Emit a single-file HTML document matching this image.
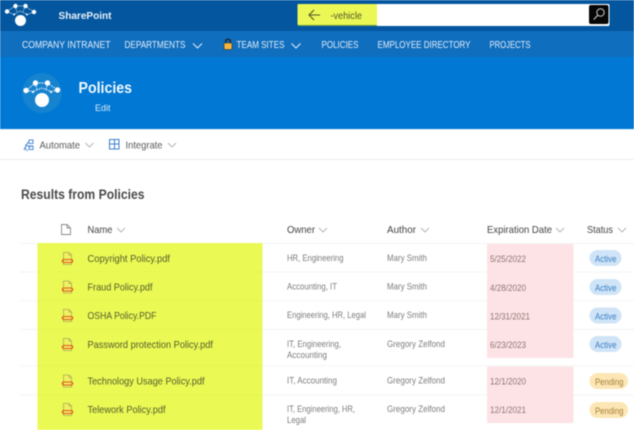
<!DOCTYPE html>
<html lang="en">
<head>
<meta charset="utf-8">
<title>Policies</title>
<style>
html,body{margin:0;padding:0;background:#fff;width:634px;height:430px;overflow:hidden}
svg{display:block;filter:blur(.45px)}
text{font-family:"Liberation Sans",sans-serif}
.nav{fill:#e3eef8;font-size:10.5px}
.hd{fill:#444;font-size:10.5px}
.nm{fill:#555e2c;font-size:10.5px}
.c{fill:#7c7c7c;font-size:9.5px}
.d{fill:#917474;font-size:9.5px}
.chev{fill:none;stroke:#b0b0b0;stroke-width:.9}
.navchev{fill:none;stroke:#dbe9f6;stroke-width:1.1}
.rl{stroke:#f3f3f3;stroke-width:1}
</style>
</head>
<body>
<svg width="634" height="430" viewBox="0 0 634 430" xmlns="http://www.w3.org/2000/svg">
<defs>
<symbol id="pdf" viewBox="0 0 14 14" overflow="visible">
<path d="M3 .5H8.500L11 3V12.500H3Z" fill="#eef25e" stroke="#b0a855" stroke-width=".8"/>
<path d="M8.500 .5V3H11" fill="none" stroke="#b0a855" stroke-width=".7"/>
<rect x="2.500" y="7.500" width="9" height="3" fill="#f4e85a" stroke="#dc5a24" stroke-width="1"/>
<rect x="1.200" y="8.200" width="1.800" height="1.600" fill="#dc5a24"/>
<rect x="11" y="8.200" width="1.800" height="1.600" fill="#dc5a24"/>
</symbol>
</defs>

<!-- top bar -->
<rect width="634" height="31" fill="#04569f"/>
<g fill="#fff">
<path d="M7 11.500L15 6L25 6L34 12M7 11.500L14 14.500L20 11L27 14.500L34 12M15 6L17 12M25 6L23 12" fill="none" stroke="#e6f0f8" stroke-width=".7" stroke-dasharray="1.400 .8"/>
<circle cx="7" cy="11.500" r="2.200"/>
<circle cx="15.500" cy="6" r="2.200"/>
<circle cx="25.500" cy="6" r="2.200"/>
<circle cx="34" cy="12" r="2.200"/>
<circle cx="14" cy="14.500" r="1"/>
<circle cx="27" cy="14.500" r="1"/>
<circle cx="20.500" cy="20.500" r="5.500"/>
</g>
<text x="58.500" y="19" fill="#e8f1f9" font-size="10.500" font-weight="700" textLength="53" lengthAdjust="spacingAndGlyphs">SharePoint</text>

<!-- search box -->
<rect x="297.500" y="4" width="312" height="22" rx="1.500" fill="#fff"/>
<path d="M299 4H377V25.500H299Q297.500 25.500 297.500 24V5.500Q297.500 4 299 4Z" fill="#eaf754"/>
<path d="M297.500 24.500Q298 25.500 299 25.500H377" fill="none" stroke="#3d7a2a" stroke-width=".8"/>
<path d="M320 15H309M314 10L309 15L314 20" fill="none" stroke="#55592a" stroke-width="1.100"/>
<text x="330.500" y="19" fill="#55592a" font-size="10" textLength="31.500" lengthAdjust="spacingAndGlyphs">-vehicle</text>
<rect x="589" y="5" width="19.500" height="19" rx="2" fill="#060606"/>
<circle cx="600.500" cy="12.500" r="3.700" fill="none" stroke="#c8c8c8" stroke-width="1"/>
<path d="M597.800 15.300L593.700 19.500" stroke="#c8c8c8" stroke-width="1.100"/>

<!-- nav -->
<rect y="31" width="634" height="26" fill="#106ebe"/>
<text class="nav" x="22" y="48" textLength="88.500" lengthAdjust="spacingAndGlyphs">COMPANY INTRANET</text>
<text class="nav" x="124.500" y="48" textLength="61" lengthAdjust="spacingAndGlyphs">DEPARTMENTS</text>
<path class="navchev" d="M193 43.500L197.500 48L202 43.500"/>
<rect x="224" y="43" width="8" height="6.500" rx="1" fill="#f2b63c" stroke="#2a2a20" stroke-width=".6"/>
<path d="M225.700 43V41.300Q225.700 39.300 228 39.300Q230.300 39.300 230.300 41.300V43" fill="none" stroke="#1a2530" stroke-width="1.400"/>
<text class="nav" x="236.500" y="48" textLength="48" lengthAdjust="spacingAndGlyphs">TEAM SITES</text>
<path class="navchev" d="M291.500 43.500L296 48L300.500 43.500"/>
<text class="nav" x="321.500" y="48" textLength="37" lengthAdjust="spacingAndGlyphs">POLICIES</text>
<text class="nav" x="377.500" y="48" textLength="93" lengthAdjust="spacingAndGlyphs">EMPLOYEE DIRECTORY</text>
<text class="nav" x="489.500" y="48" textLength="41" lengthAdjust="spacingAndGlyphs">PROJECTS</text>

<!-- hero -->
<rect y="57" width="634" height="72" fill="#0078d4"/>
<circle cx="42" cy="93" r="20" fill="#1683cf"/>
<g fill="#fff">
<path d="M26 90.500L35.500 83L47.500 83L57.500 90M26 90.500L33 91.500L42 88L51 91.500L57.500 90M35.500 83L37 90M47.500 83L46 90" fill="none" stroke="#e6f0f8" stroke-width=".9" stroke-dasharray="1.800 .8"/>
<circle cx="26" cy="90.500" r="2.700"/>
<circle cx="35.500" cy="83" r="2.700"/>
<circle cx="47.500" cy="83" r="2.700"/>
<circle cx="57.500" cy="90" r="2.700"/>
<circle cx="33" cy="92" r="1.100"/>
<circle cx="51" cy="92" r="1.100"/>
<circle cx="42" cy="100" r="7"/>
</g>
<text x="78.500" y="93" fill="#f2f8fd" font-size="16" font-weight="700" textLength="53.500" lengthAdjust="spacingAndGlyphs">Policies</text>
<text x="95" y="111" fill="#dcebf8" font-size="9.500" textLength="15.500" lengthAdjust="spacingAndGlyphs">Edit</text>
<rect y="129" width="634" height="1" fill="#e6f1fa"/>

<!-- command bar -->
<g fill="none" stroke="#3b7fd0" stroke-width=".9">
<rect x="29" y="140" width="4" height="3.500"/>
<rect x="29" y="146" width="4" height="3.500"/>
<path d="M24 150L28 142M25 145L31 147M24.500 147.500L27.500 151"/>
</g>
<text x="39.500" y="148.500" fill="#5a5a5a" font-size="10.500" textLength="40.500" lengthAdjust="spacingAndGlyphs">Automate</text>
<path class="chev" d="M85.500 143L89.500 147L93.500 143"/>
<g fill="none" stroke="#3b7fd0" stroke-width="1">
<rect x="109.500" y="139.500" width="9.500" height="9.500"/>
<path d="M109.500 144H119M114.500 139.500V149"/>
</g>
<text x="125.500" y="148.500" fill="#5a5a5a" font-size="10.500" textLength="37" lengthAdjust="spacingAndGlyphs">Integrate</text>
<path class="chev" d="M168 143L172 147L176 143"/>
<rect y="159" width="634" height="1" fill="#ededed"/>

<!-- title -->
<text x="21" y="199" fill="#4a4a4a" font-size="13.500" font-weight="700" textLength="123.500" lengthAdjust="spacingAndGlyphs">Results from Policies</text>

<!-- headers -->
<path d="M61.500 224.500H67L70.500 228V234.500H61.500Z M67 224.500V228H70.500" fill="none" stroke="#8a8a8a" stroke-width=".9"/>
<text class="hd" x="87.500" y="233" textLength="25" lengthAdjust="spacingAndGlyphs">Name</text>
<path class="chev" d="M117 228L121 232L125 228"/>
<text class="hd" x="287" y="233" textLength="28" lengthAdjust="spacingAndGlyphs">Owner</text>
<path class="chev" d="M319 228L323 232L327 228"/>
<text class="hd" x="387" y="233" textLength="29" lengthAdjust="spacingAndGlyphs">Author</text>
<path class="chev" d="M421 228L425 232L429 228"/>
<text class="hd" x="487" y="233" textLength="65" lengthAdjust="spacingAndGlyphs">Expiration Date</text>
<path class="chev" d="M556 228L560 232L564 228"/>
<text class="hd" x="587" y="233" textLength="26" lengthAdjust="spacingAndGlyphs">Status</text>
<path class="chev" d="M618 228L622 232L626 228"/>

<!-- row lines -->
<g class="rl">
<path d="M20 243.500H634M20 272H634M20 300.800H634M20 329.500H634M20 365.800H634M20 395H634"/>
</g>

<!-- highlights -->
<rect x="37.500" y="243" width="225" height="187" fill="#eaf954"/>
<g stroke="#e6f552" stroke-width="1"><path d="M37.500 272H262.500M37.500 300.800H262.500M37.500 329.500H262.500M37.500 365.800H262.500M37.500 395H262.500"/></g>
<rect x="487" y="244" width="86.500" height="114" fill="#fde3e6"/>
<rect x="487" y="366.500" width="86.500" height="56.500" fill="#fde3e6"/>

<!-- pdf icons -->
<use href="#pdf" x="60.500" y="252" width="14" height="14"/>
<use href="#pdf" x="60.500" y="280.500" width="14" height="14"/>
<use href="#pdf" x="60.500" y="309" width="14" height="14"/>
<use href="#pdf" x="60.500" y="338" width="14" height="14"/>
<use href="#pdf" x="60.500" y="374.500" width="14" height="14"/>
<use href="#pdf" x="60.500" y="403" width="14" height="14"/>

<!-- names -->
<text class="nm" x="87.500" y="262" textLength="82.500" lengthAdjust="spacingAndGlyphs">Copyright Policy.pdf</text>
<text class="nm" x="87.500" y="290.500" textLength="65" lengthAdjust="spacingAndGlyphs">Fraud Policy.pdf</text>
<text class="nm" x="87.500" y="319" textLength="69" lengthAdjust="spacingAndGlyphs">OSHA Policy.PDF</text>
<text class="nm" x="87.500" y="348" textLength="125.500" lengthAdjust="spacingAndGlyphs">Password protection Policy.pdf</text>
<text class="nm" x="87.500" y="384.500" textLength="117" lengthAdjust="spacingAndGlyphs">Technology Usage Policy.pdf</text>
<text class="nm" x="87.500" y="413" textLength="78" lengthAdjust="spacingAndGlyphs">Telework Policy.pdf</text>

<!-- owners -->
<text class="c" x="287" y="261" textLength="56.500" lengthAdjust="spacingAndGlyphs">HR, Engineering</text>
<text class="c" x="287" y="289.500" textLength="50" lengthAdjust="spacingAndGlyphs">Accounting, IT</text>
<text class="c" x="287" y="318" textLength="79" lengthAdjust="spacingAndGlyphs">Engineering, HR, Legal</text>
<text class="c" x="287" y="347" textLength="54" lengthAdjust="spacingAndGlyphs">IT, Engineering,</text>
<text class="c" x="287" y="358" textLength="40" lengthAdjust="spacingAndGlyphs">Accounting</text>
<text class="c" x="287" y="383.500" textLength="50" lengthAdjust="spacingAndGlyphs">IT, Accounting</text>
<text class="c" x="287" y="412" textLength="68" lengthAdjust="spacingAndGlyphs">IT, Engineering, HR,</text>
<text class="c" x="287" y="423" textLength="19" lengthAdjust="spacingAndGlyphs">Legal</text>

<!-- authors -->
<text class="c" x="387" y="261" textLength="40" lengthAdjust="spacingAndGlyphs">Mary Smith</text>
<text class="c" x="387" y="289.500" textLength="40" lengthAdjust="spacingAndGlyphs">Mary Smith</text>
<text class="c" x="387" y="318" textLength="40" lengthAdjust="spacingAndGlyphs">Mary Smith</text>
<text class="c" x="387" y="347" textLength="58" lengthAdjust="spacingAndGlyphs">Gregory Zelfond</text>
<text class="c" x="387" y="383.500" textLength="58" lengthAdjust="spacingAndGlyphs">Gregory Zelfond</text>
<text class="c" x="387" y="412" textLength="58" lengthAdjust="spacingAndGlyphs">Gregory Zelfond</text>

<!-- dates -->
<text class="d" x="490" y="262" textLength="36" lengthAdjust="spacingAndGlyphs">5/25/2022</text>
<text class="d" x="490" y="291" textLength="36" lengthAdjust="spacingAndGlyphs">4/28/2020</text>
<text class="d" x="490" y="319.500" textLength="40" lengthAdjust="spacingAndGlyphs">12/31/2021</text>
<text class="d" x="490" y="348" textLength="36" lengthAdjust="spacingAndGlyphs">6/23/2023</text>
<text class="d" x="490" y="384.500" textLength="36" lengthAdjust="spacingAndGlyphs">12/1/2020</text>
<text class="d" x="490" y="413" textLength="36" lengthAdjust="spacingAndGlyphs">12/1/2021</text>

<!-- status -->
<g fill="#cfe4f7">
<rect x="589.500" y="250" width="32" height="16" rx="8"/>
<rect x="589.500" y="279" width="32" height="16" rx="8"/>
<rect x="589.500" y="307.500" width="32" height="16" rx="8"/>
<rect x="589.500" y="336" width="32" height="16" rx="8"/>
</g>
<g fill="#fce6b4">
<rect x="589.500" y="373" width="38.500" height="16" rx="8"/>
<rect x="589.500" y="402" width="38.500" height="16" rx="8"/>
</g>
<g fill="#3b7fc4" font-size="9.500">
<text x="595" y="262" textLength="21.500" lengthAdjust="spacingAndGlyphs">Active</text>
<text x="595" y="291" textLength="21.500" lengthAdjust="spacingAndGlyphs">Active</text>
<text x="595" y="319.500" textLength="21.500" lengthAdjust="spacingAndGlyphs">Active</text>
<text x="595" y="348" textLength="21.500" lengthAdjust="spacingAndGlyphs">Active</text>
</g>
<g fill="#a5813a" font-size="9.500">
<text x="595" y="385" textLength="28.500" lengthAdjust="spacingAndGlyphs">Pending</text>
<text x="595" y="414" textLength="28.500" lengthAdjust="spacingAndGlyphs">Pending</text>
</g>
</svg>
</body>
</html>
